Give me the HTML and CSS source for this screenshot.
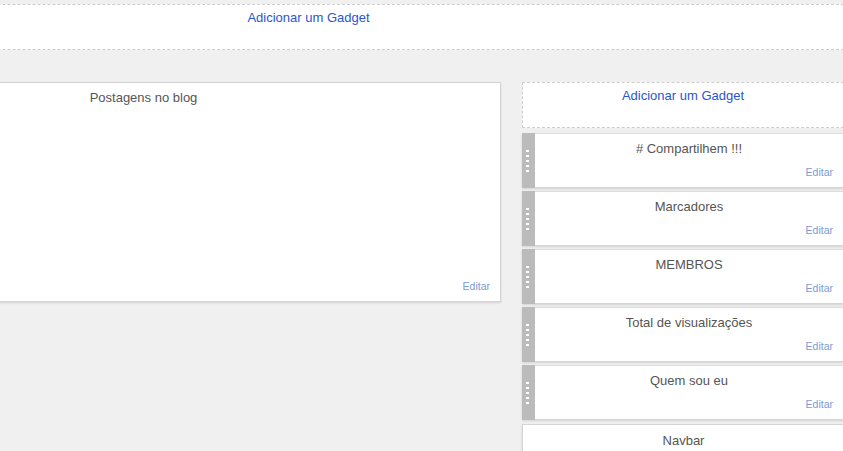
FILE: index.html
```html
<!DOCTYPE html>
<html>
<head>
    <meta charset="utf-8">
    <title>Layout</title>
    <link rel="stylesheet" href="styles.css">
</head>
<body>
    <div class="page">
        <!-- cabeçalho -->
        <div class="section header-section">
            <a class="add-gadget" href="#">Adicionar um Gadget</a>
        </div>

        <div class="columns">
            <div class="main-col">
                <div class="widget main-widget">
                    <div class="widget-title">Postagens no blog</div>
                    <div class="widget-edit"><a href="#">Editar</a></div>
                </div>
            </div>

            <div class="side-col">
                <div class="section side-add">
                    <a class="add-gadget" href="#">Adicionar um Gadget</a>
                </div>

                <div class="widget side-widget">
                    <div class="handle"><span></span><span></span><span></span><span></span><span></span></div>
                    <div class="widget-body">
                        <div class="widget-title"># Compartilhem !!!</div>
                        <div class="widget-edit"><a href="#">Editar</a></div>
                    </div>
                </div>
                <div class="widget side-widget">
                    <div class="handle"><span></span><span></span><span></span><span></span><span></span></div>
                    <div class="widget-body">
                        <div class="widget-title">Marcadores</div>
                        <div class="widget-edit"><a href="#">Editar</a></div>
                    </div>
                </div>
                <div class="widget side-widget">
                    <div class="handle"><span></span><span></span><span></span><span></span><span></span></div>
                    <div class="widget-body">
                        <div class="widget-title">MEMBROS</div>
                        <div class="widget-edit"><a href="#">Editar</a></div>
                    </div>
                </div>
                <div class="widget side-widget">
                    <div class="handle"><span></span><span></span><span></span><span></span><span></span></div>
                    <div class="widget-body">
                        <div class="widget-title">Total de visualizações</div>
                        <div class="widget-edit"><a href="#">Editar</a></div>
                    </div>
                </div>
                <div class="widget side-widget">
                    <div class="handle"><span></span><span></span><span></span><span></span><span></span></div>
                    <div class="widget-body">
                        <div class="widget-title">Quem sou eu</div>
                        <div class="widget-edit"><a href="#">Editar</a></div>
                    </div>
                </div>

                <div class="widget navbar-widget">
                    <div class="widget-title">Navbar</div>
                </div>
            </div>
        </div>
    </div>
</body>
</html>
```

FILE: styles.css
```css
html, body {
    margin: 0;
    padding: 0;
    background: #f0f0f0;
    overflow: hidden;
}
body {
    font-family: Arial, "Liberation Sans", sans-serif;
    font-size: 13px;
    line-height: 16px;
    color: #555;
}
a {
    text-decoration: none;
}
.page {
    margin-left: -227px;
    width: 1071px;
    padding-top: 4px;
}
.section {
    background: #fff;
    border-top: 1px dashed #ccc;
    border-bottom: 1px dashed #ccc;
    text-align: center;
}
.header-section {
    height: 39px;
    padding-top: 5px;
}
.add-gadget {
    color: #2a55d4;
}
.columns {
    display: flex;
    margin-top: 32px;
    padding-left: 13px;
    gap: 21px;
}
.main-col {
    width: 715px;
}
.side-col {
    flex: 1;
}
.widget {
    background: #fff;
    border: 1px solid #d4d4d4;
    box-shadow: 0 1px 2px rgba(0, 0, 0, 0.12);
}
.widget-title {
    text-align: center;
}
.widget-edit {
    text-align: right;
    font-size: 10.5px;
    line-height: 13px;
}
.widget-edit a {
    color: #7b9ad6;
}
.main-widget {
    height: 211px;
    padding-top: 7px;
    display: flex;
    flex-direction: column;
    justify-content: space-between;
}
.main-widget .widget-edit {
    padding: 0 10px 8px 0;
}
.side-add {
    border: 1px dashed #ccc;
    height: 39px;
    padding-top: 5px;
}
.side-widget {
    display: flex;
    margin-top: 5px;
    border-right: none;
    border-left: none;
    border-top-color: #ddd;
    height: 53px;
}
.side-widget + .side-widget {
    margin-top: 3px;
}
.handle {
    width: 13px;
    background: #bbb;
    margin: -1px 0;
    display: flex;
    flex-direction: column;
    justify-content: center;
    align-items: flex-start;
    gap: 3px;
    padding-left: 4px;
    box-sizing: border-box;
}
.handle span {
    display: block;
    width: 3px;
    height: 2px;
    background: #fff;
}
.widget-body {
    flex: 1;
    padding: 7px 0 0 0;
}
.side-widget .widget-title {
    padding-right: 1px;
}
.side-widget .widget-edit {
    margin-top: 9px;
    padding-right: 11px;
}
.navbar-widget {
    margin-top: 4px;
    height: 40px;
    padding-top: 8px;
    border-right: none;
}
```
